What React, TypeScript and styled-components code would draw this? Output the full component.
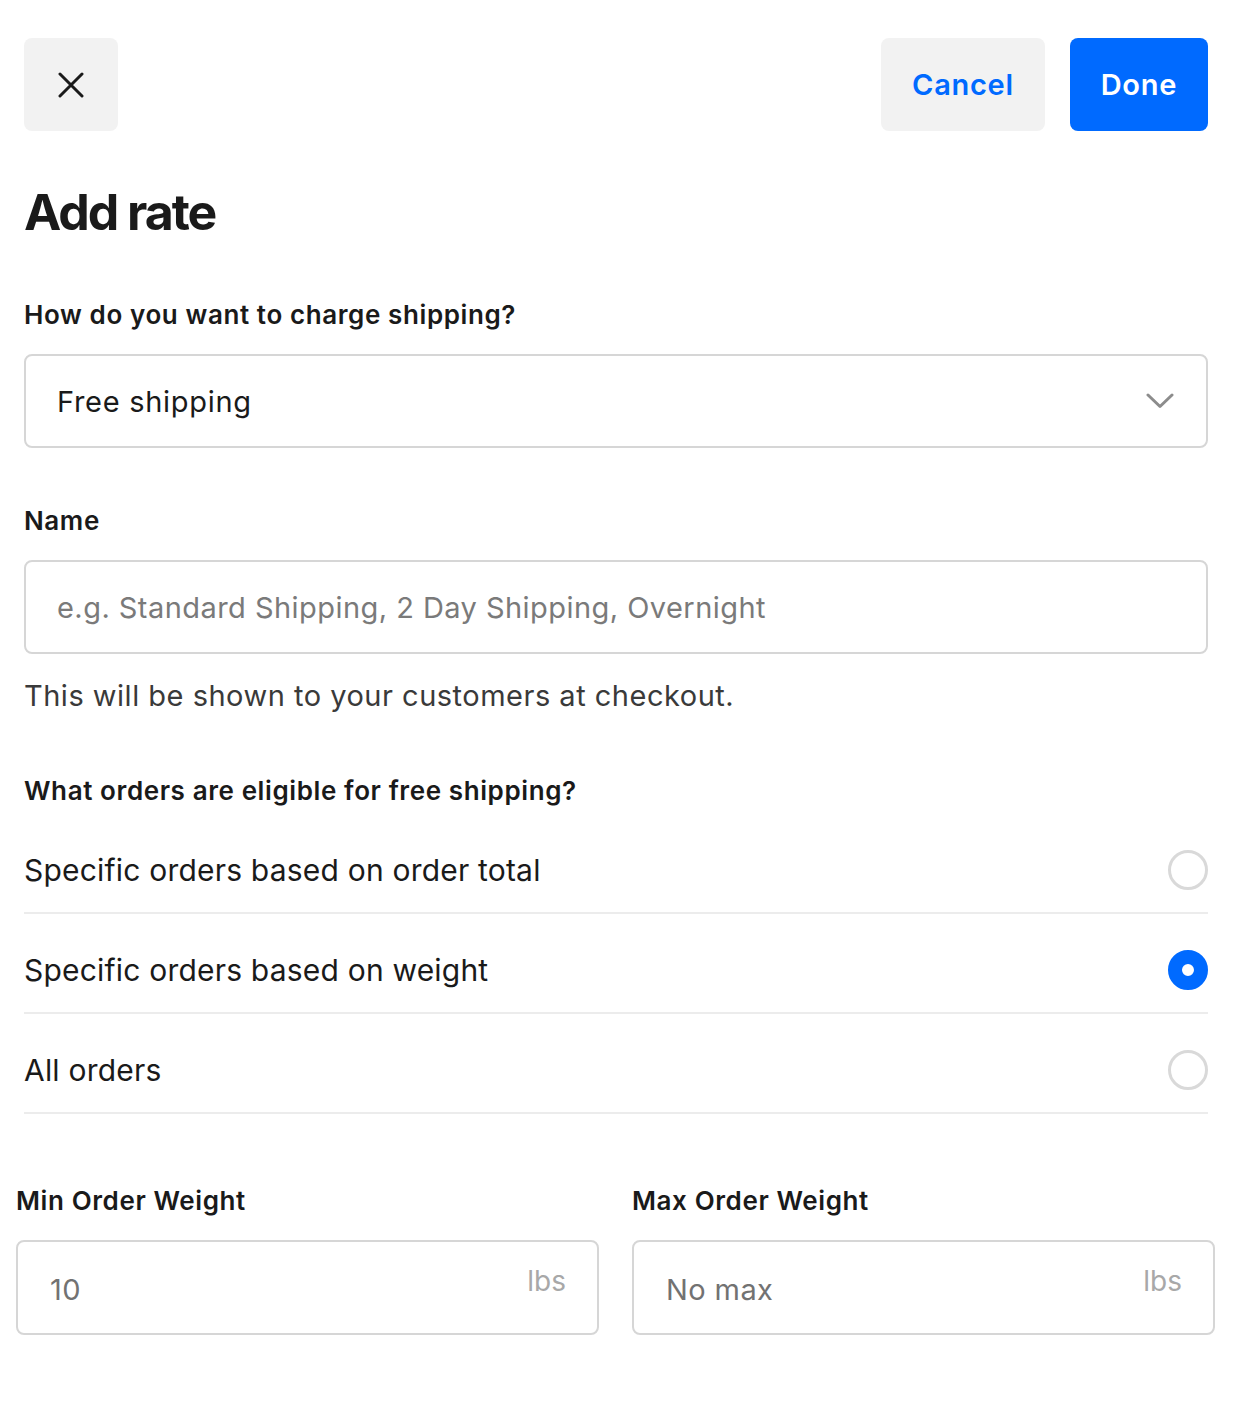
import styled, { createGlobalStyle } from "styled-components";

const GlobalStyle = createGlobalStyle`
  body {
    margin: 0;
    background: #fff;
    font-family: Inter, "Noto Sans", "Liberation Sans", sans-serif;
    color: #1a1a1a;
  }
  * { box-sizing: border-box; }
`;

const blue = "#006aff";

export const Page = styled.div`
  width: 1244px;
  padding: 38px 36px 60px 24px;
`;

export const Header = styled.div`
  display: flex;
  justify-content: space-between;
  align-items: center;
  height: 93px;
`;

export const Actions = styled.div`
  display: flex;
  gap: 25px;
  height: 100%;
`;

export const IconButton = styled.button`
  width: 94px;
  height: 93px;
  border: none;
  border-radius: 8px;
  background: #f2f2f2;
  display: flex;
  align-items: center;
  justify-content: center;
  padding: 0;
  svg {
    stroke: #1a1a1a;
  }
`;

export const TextButton = styled.button<{ primary?: boolean }>`
  height: 93px;
  padding: 0 31px;
  border: none;
  border-radius: 8px;
  font-family: inherit;
  font-size: 29px;
  font-weight: 600;
  letter-spacing: 0.7px;
  background: ${({ primary }) => (primary ? blue : "#f2f2f2")};
  color: ${({ primary }) => (primary ? "#fff" : blue)};
`;

export const Title = styled.h1`
  margin: 51px 0 0;
  font-size: 50px;
  line-height: 60px;
  font-weight: 700;
  letter-spacing: -2px;
`;

export const FieldLabel = styled.div<{ gap?: number }>`
  margin-top: ${({ gap }) => gap ?? 58}px;
  font-size: 26px;
  line-height: 30px;
  font-weight: 600;
  letter-spacing: 0.6px;
`;

export const Box = styled.div`
  margin-top: 24px;
  height: 94px;
  border: 2px solid #d6d6d6;
  border-radius: 8px;
  display: flex;
  align-items: center;
  justify-content: space-between;
  padding: 0 32px 0 31px;
  font-size: 29px;
  letter-spacing: 0.7px;
  color: #1a1a1a;
`;

export const TextInput = styled.input`
  margin-top: 24px;
  display: block;
  width: 100%;
  height: 94px;
  border: 2px solid #d6d6d6;
  border-radius: 8px;
  padding: 0 31px;
  font-family: inherit;
  font-size: 29px;
  letter-spacing: 0.45px;
  color: #1a1a1a;
  outline: none;
  &::placeholder {
    color: #7a7a7a;
  }
`;

export const Help = styled.p`
  margin: 24px 0 0;
  font-size: 29px;
  line-height: 36px;
  letter-spacing: 0.5px;
  color: #3a3a3a;
`;

export const RadioList = styled.div`
  margin-top: 8px;
`;

export const RadioRow = styled.label`
  display: flex;
  align-items: center;
  justify-content: space-between;
  padding: 36px 0 22px;
  border-bottom: 2px solid #ececec;
  font-size: 30px;
  line-height: 40px;
  letter-spacing: 0.2px;
`;

export const RadioMark = styled.span<{ checked?: boolean }>`
  width: 40px;
  height: 40px;
  border-radius: 50%;
  flex: none;
  border: ${({ checked }) => (checked ? `14px solid ${blue}` : "3px solid #d9d9d9")};
  background: #fff;
`;

export const WeightGrid = styled.div`
  display: grid;
  grid-template-columns: 1fr 1fr;
  column-gap: 33px;
  margin: 0 -7px 0 -8px;
`;

export const WeightField = styled.div``;

export const SuffixBox = styled.div`
  margin-top: 24px;
  height: 95px;
  border: 2px solid #d6d6d6;
  border-radius: 8px;
  display: flex;
  align-items: flex-start;
  padding: 0 31px 0 32px;
`;

export const SuffixInput = styled.input`
  flex: 1;
  min-width: 0;
  margin-top: 29px;
  border: none;
  outline: none;
  padding: 0;
  height: 36px;
  font-family: inherit;
  font-size: 29px;
  letter-spacing: 0.4px;
  color: #1a1a1a;
  &::placeholder {
    color: #727272;
  }
`;

export const Suffix = styled.span`
  margin-top: 21px;
  font-size: 28px;
  line-height: 36px;
  color: #a8a8a8;
`;

const CloseIcon = () => (
  <svg width="26" height="26" viewBox="0 0 26 26" fill="none" strokeWidth="3" strokeLinecap="round">
    <path d="M2 2 L24 24 M24 2 L2 24" />
  </svg>
);

const Chevron = () => (
  <svg width="28" height="16" viewBox="0 0 28 16" fill="none" stroke="#8c8c8c" strokeWidth="3" strokeLinecap="round" strokeLinejoin="round">
    <path d="M2 2 L14 13.5 L26 2" />
  </svg>
);

const options = [
  { label: "Specific orders based on order total", checked: false },
  { label: "Specific orders based on weight", checked: true },
  { label: "All orders", checked: false },
];

export default function App() {
  return (
    <>
      <GlobalStyle />
      <Page>
        <Header>
          <IconButton aria-label="Close">
            <CloseIcon />
          </IconButton>
          <Actions>
            <TextButton>Cancel</TextButton>
            <TextButton primary>Done</TextButton>
          </Actions>
        </Header>

        <Title>Add rate</Title>

        <FieldLabel>How do you want to charge shipping?</FieldLabel>
        <Box>
          <span>Free shipping</span>
          <Chevron />
        </Box>

        <FieldLabel>Name</FieldLabel>
        <TextInput placeholder="e.g. Standard Shipping, 2 Day Shipping, Overnight" />
        <Help>This will be shown to your customers at checkout.</Help>

        <FieldLabel gap={62}>What orders are eligible for free shipping?</FieldLabel>
        <RadioList>
          {options.map((o) => (
            <RadioRow key={o.label}>
              <span>{o.label}</span>
              <RadioMark checked={o.checked} />
            </RadioRow>
          ))}
        </RadioList>

        <WeightGrid>
          <WeightField>
            <FieldLabel gap={72}>Min Order Weight</FieldLabel>
            <SuffixBox>
              <SuffixInput placeholder="10" />
              <Suffix>lbs</Suffix>
            </SuffixBox>
          </WeightField>
          <WeightField>
            <FieldLabel gap={72}>Max Order Weight</FieldLabel>
            <SuffixBox>
              <SuffixInput placeholder="No max" />
              <Suffix>lbs</Suffix>
            </SuffixBox>
          </WeightField>
        </WeightGrid>
      </Page>
    </>
  );
}
